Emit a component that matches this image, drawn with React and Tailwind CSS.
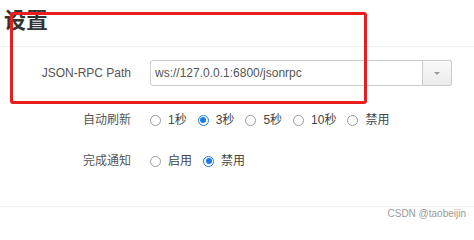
import React from "react";

const font = { fontFamily: '"Liberation Sans", "Noto Sans CJK SC", sans-serif' };

function Radio({ label, checked }) {
  return (
    <label className="flex items-center gap-[4px] mr-[11px]">
      <span
        className={
          "w-[11px] h-[11px] rounded-full border flex items-center justify-center bg-white " +
          (checked ? "border-[#1e7be6]" : "border-[#9a9a9a]")
        }
      >
        {checked && <span className="w-[6px] h-[6px] rounded-full bg-[#1e7be6]" />}
      </span>
      <span className="text-[12px] text-[#444] leading-[20px] ml-[3px]">{label}</span>
    </label>
  );
}

function Row({ label, children, className = "" }) {
  return (
    <div className={"flex items-center " + className}>
      <div className="w-[132px] text-right text-[12px] text-[#555] pr-[1px]">{label}</div>
      <div className="ml-[18px] flex items-center">{children}</div>
    </div>
  );
}

export default function App() {
  return (
    <div className="relative w-[474px] h-[222px] bg-white overflow-hidden" style={font}>
      <h1 className="h-[47px] border-b border-[#eeeeee] pl-[4px] pt-[8px] text-[22px] leading-[26px] font-bold text-[#333]">
        设置
      </h1>

      <Row label="JSON-RPC Path" className="mt-[13px] h-[26px]">
        <div className="flex h-[26px]">
          <div className="w-[273px] h-full border border-[#cccccc] rounded-l-[3px] px-[4px] flex items-center text-[12px] text-[#555]">
            ws://127.0.0.1:6800/jsonrpc
          </div>
          <div className="w-[29px] h-full border border-l-0 border-[#cccccc] rounded-r-[3px] bg-gradient-to-b from-[#fafafa] to-[#ebebeb] flex items-center justify-center">
            <span className="w-0 h-0 border-l-[3px] border-r-[3px] border-t-[3px] border-l-transparent border-r-transparent border-t-[#999]" />
          </div>
        </div>
      </Row>

      <Row label="自动刷新" className="mt-[24px] h-[20px]">
        <Radio label="1秒" />
        <Radio label="3秒" checked />
        <Radio label="5秒" />
        <Radio label="10秒" />
        <Radio label="禁用" />
      </Row>

      <Row label="完成通知" className="mt-[21px] h-[20px]">
        <Radio label="启用" />
        <Radio label="禁用" checked />
      </Row>

      <div className="mt-[35px] border-t border-[#eeeeee] flex justify-end pr-[8px] pt-[1px]">
        <span className="text-[10px] leading-[12px] text-[#999]">CSDN @taobeijin</span>
      </div>

      <div className="absolute left-[10px] top-[12px] w-[357px] h-[92px] border-[3px] border-[#e81e1e] rounded-[3px] pointer-events-none" />
    </div>
  );
}
